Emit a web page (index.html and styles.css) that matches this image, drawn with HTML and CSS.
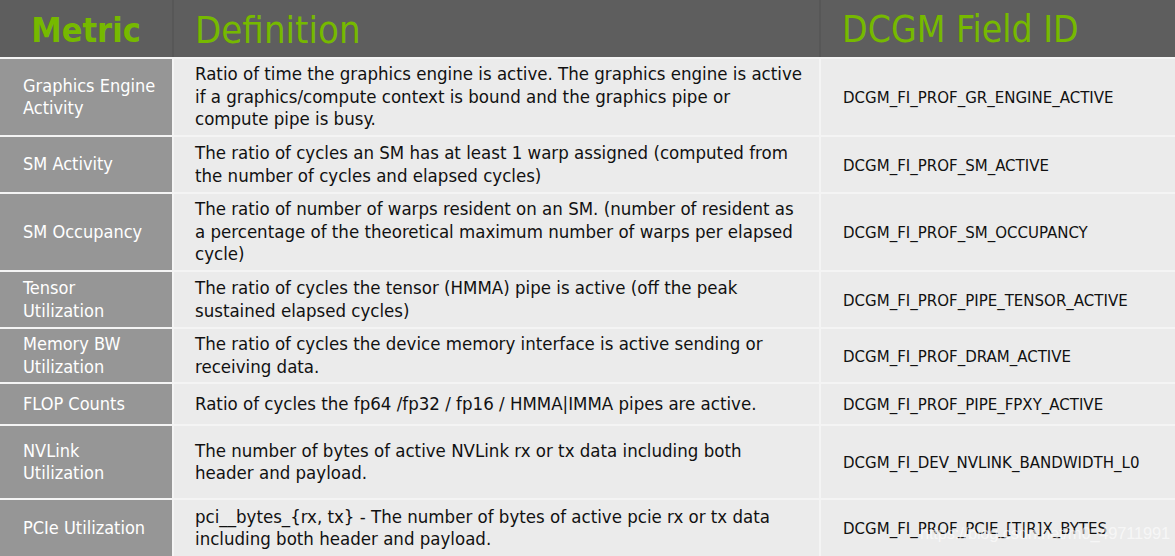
FILE: index.html
```html
<!DOCTYPE html>
<html>
<head>
<meta charset="utf-8">
<link rel="stylesheet" href="styles.css">
</head>
<body>
<div class="table">
  <div class="hd hd-metric">Metric</div>
  <div class="hd hd-def">Definition</div>
  <div class="hd hd-id">DCGM Field ID</div>

  <div class="metric">Graphics Engine<br>Activity</div>
  <div class="def">Ratio of time the graphics engine is active. The graphics engine is active<br>if a graphics/compute context is bound and the graphics pipe or<br>compute pipe is busy.</div>
  <div class="fid">DCGM_FI_PROF_GR_ENGINE_ACTIVE</div>

  <div class="metric">SM Activity</div>
  <div class="def">The ratio of cycles an SM has at least 1 warp assigned (computed from<br>the number of cycles and elapsed cycles)</div>
  <div class="fid">DCGM_FI_PROF_SM_ACTIVE</div>

  <div class="metric">SM Occupancy</div>
  <div class="def">The ratio of number of warps resident on an SM. (number of resident as<br>a percentage of the theoretical maximum number of warps per elapsed<br>cycle)</div>
  <div class="fid">DCGM_FI_PROF_SM_OCCUPANCY</div>

  <div class="metric">Tensor<br>Utilization</div>
  <div class="def">The ratio of cycles the tensor (HMMA) pipe is active (off the peak<br>sustained elapsed cycles)</div>
  <div class="fid">DCGM_FI_PROF_PIPE_TENSOR_ACTIVE</div>

  <div class="metric">Memory BW<br>Utilization</div>
  <div class="def">The ratio of cycles the device memory interface is active sending or<br>receiving data.</div>
  <div class="fid">DCGM_FI_PROF_DRAM_ACTIVE</div>

  <div class="metric">FLOP Counts</div>
  <div class="def">Ratio of cycles the fp64 /fp32 / fp16 / HMMA|IMMA pipes are active.</div>
  <div class="fid">DCGM_FI_PROF_PIPE_FPXY_ACTIVE</div>

  <div class="metric">NVLink<br>Utilization</div>
  <div class="def">The number of bytes of active NVLink rx or tx data including both<br>header and payload.</div>
  <div class="fid">DCGM_FI_DEV_NVLINK_BANDWIDTH_L0</div>

  <div class="metric">PCIe Utilization</div>
  <div class="def">pci__bytes_{rx, tx} - The number of bytes of active pcie rx or tx data<br>including both header and payload.</div>
  <div class="fid">DCGM_FI_PROF_PCIE_[T|R]X_BYTES</div>
</div>
<div class="watermark">https://blog.csdn.net/m0_49711991</div>
</body>
</html>
```
FILE: styles.css
```css
html, body {
  margin: 0;
  padding: 0;
}
body {
  width: 1175px;
  height: 556px;
  overflow: hidden;
  position: relative;
  background: #f2f2f2;
  font-family: "DejaVu Sans Condensed", "DejaVu Sans", sans-serif;
}
.table {
  display: grid;
  grid-template-columns: 172px 645px 354px;
  grid-template-rows: 57px 76px 55px 76px 55px 53px 40px 72px 56px;
  column-gap: 2px;
  row-gap: 2px;
  background: #f4f4f4;
  height: 556px;
}
.hd {
  background: #5e5e5e;
  color: #76b900;
  font-size: 38px;
  display: flex;
  align-items: center;
  padding-top: 2px;
}
.hd-metric,
.hd-def {
  box-shadow: 2px 0 0 #575757;
}
.hd-metric {
  justify-content: center;
  font-weight: bold;
  font-size: 34px;
}
.hd-def {
  padding-left: 21px;
}
.hd-id {
  padding-left: 21px;
  font-size: 37px;
}
.metric {
  background: #969696;
  color: #ffffff;
  font-size: 18px;
  line-height: 22.5px;
  padding-left: 23px;
  display: flex;
  align-items: center;
}
.def {
  background: #ebebeb;
  color: #111;
  font-size: 18.5px;
  line-height: 22.5px;
  padding: 0 4px 0 21px;
  white-space: nowrap;
  display: flex;
  align-items: center;
}
.fid {
  background: #ebebeb;
  color: #111;
  font-size: 16.7px;
  padding-left: 22px;
  display: flex;
  align-items: center;
}
.watermark {
  position: absolute;
  left: 920px;
  top: 524px;
  font-family: "Liberation Sans", Arial, sans-serif;
  font-size: 16.5px;
  letter-spacing: -0.2px;
  color: rgba(255, 255, 255, 0.6);
}
```
